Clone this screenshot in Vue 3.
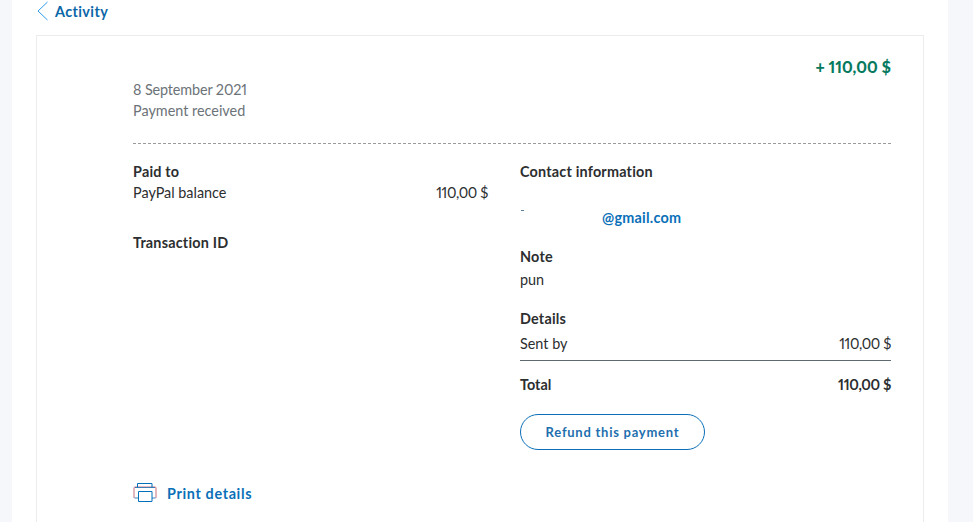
<script setup>
const side = [
  { label: 'Sent by', value: '110,00 $' },
]
</script>

<template>
  <div class="page">
    <main class="panel">
      <a class="back">
        <svg class="chev" width="12" height="20" viewBox="0 0 12 20"><path d="M10.500 1 1 10 10.500 19" fill="none" stroke="#2f9be8" stroke-width="1"/></svg>
        <span>Activity</span>
      </a>
      <section class="card">
        <div class="head">
          <div class="amount">+ 110,00 $</div>
          <div class="date">8 September 2021</div>
          <div class="status">Payment received</div>
        </div>
        <div class="cols">
          <div class="left">
            <h4>Paid to</h4>
            <div class="row"><span>PayPal balance</span><span class="val">110,00 $</span></div>
            <h4 class="txn">Transaction ID</h4>
          </div>
          <div class="right">
            <h4>Contact information</h4>
            <div class="mail"><span class="dash"></span><a>@gmail.com</a></div>
            <h4 class="note">Note</h4>
            <div class="pun">pun</div>
            <h4 class="details">Details</h4>
            <div v-for="r in side" :key="r.label" class="row sent"><span>{{ r.label }}</span><span class="val">{{ r.value }}</span></div>
            <div class="row total"><span>Total</span><span class="val">110,00 $</span></div>
            <button class="refund">Refund this payment</button>
          </div>
        </div>
        <a class="print">
          <svg width="24" height="22" viewBox="0 0 24 22" fill="none">
            <path d="M1 16.500V6.500A1 1 0 0 1 2 5.500h20a1 1 0 0 1 1 1v10" stroke="#c9707e" stroke-width="1" transform="translate(0 -.5)"/>
            <path d="M1.500 16H5M19 16h3.500M2 5.500h20" stroke="#3f7fb5" stroke-width="1"/>
            <path d="M4.500 5.500v-4h14.500v4" stroke="#0070ba" stroke-width="1"/>
            <path d="M5.500 9.500h13.500v10H5.500z" stroke="#0070ba" stroke-width="1" fill="#fff"/>
          </svg>
          <span>Print details</span>
        </a>
      </section>
    </main>
  </div>
</template>

<style>
html, body { margin: 0; background: #f5f7fa; }
</style>

<style scoped>
.page { height: 522px; overflow: hidden; background: #f5f7fa; font-family: Lato, "Open Sans", sans-serif; font-size: 14.4px; color: #2c2e2f; padding: 0 25px 0 12px; font-variant-numeric: proportional-nums; }
.panel { background: #fff; height: 522px; padding: 0 24px; box-sizing: border-box; }
.back { display: flex; align-items: center; height: 35px; padding-bottom: 13px; box-sizing: border-box; gap: 6px; color: #0a67a8; font-weight: 700; font-size: 14.4px; letter-spacing: .4px; }
.chev { margin-left: 1px; }
.card { border: 1px solid #eaeced; padding: 0 32px 0 96px; height: 560px; box-sizing: border-box; }
.head { position: relative; padding-top: 43px; height: 108px; box-sizing: border-box; border-bottom: 1px dashed #9a9a9a; color: #6c7378; line-height: 21px; }
.date { letter-spacing: -.12px; }
.amount { position: absolute; right: 0; top: 20px; color: #067a5f; font-weight: 900; font-size: 16px; line-height: 22px; }
.cols { display: grid; grid-template-columns: 355px 371px; gap: 32px; padding-top: 18px; }
h4 { margin: 0; font-size: 14.4px; font-weight: 700; line-height: 20px; color: #2c2e2f; letter-spacing: .2px; }
.row { display: flex; justify-content: space-between; line-height: 21px; }
.val { letter-spacing: -.35px; }
.txn { margin-top: 30px; }
.mail { position: relative; display: flex; margin-top: 25px; line-height: 22px; height: 22px; }
.dash { width: 82px; }
.dash::before { content: ""; position: absolute; left: 1px; top: 3px; width: 3px; height: 1px; background: #5a7f9c; }
.mail a { color: #0a70b8; font-weight: 700; letter-spacing: .25px; }
.note { margin-top: 18px; }
.pun { margin-top: 2px; line-height: 21px; }
.details { margin-top: 19px; }
.sent { border-bottom: 1px solid #5f6a70; margin-top: 4px; height: 27px; }
.total { font-weight: 700; margin-top: 13px; }
.refund { display: block; margin-top: 19px; width: 185px; height: 36px; border-radius: 18px; border: 1px solid #0a70b8; background: #fff; color: #1e6fae; font: 700 13px Lato, sans-serif; letter-spacing: .75px; padding: 0; }
.print { display: flex; align-items: center; gap: 10px; margin-top: 32px; color: #0a70b8; font-weight: 700; letter-spacing: .65px; }
</style>
